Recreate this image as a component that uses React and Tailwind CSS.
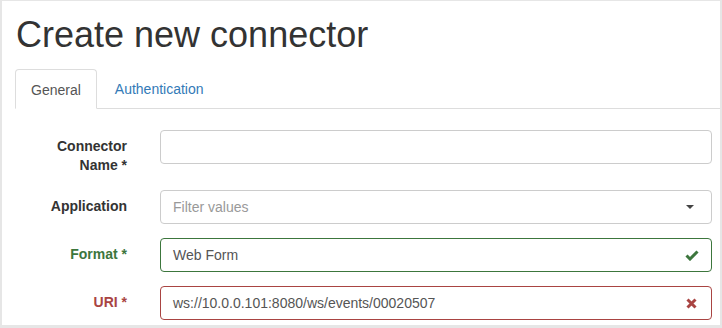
import React from 'react';

const Caret = () => (
  <svg width="8" height="4" viewBox="0 0 8 4" className="text-[#444]">
    <path d="M0 0h8L4 4z" fill="currentColor" />
  </svg>
);

const Check = () => (
  <svg width="14" height="11" viewBox="0 0 14 11">
    <path d="M1.5 5.5l3.5 3.5L12.5 1.5" fill="none" stroke="#3c763d" strokeWidth="3" />
  </svg>
);

const Cross = () => (
  <svg width="11" height="11" viewBox="0 0 11 11">
    <path d="M1.5 1.5l8 8M9.5 1.5l-8 8" fill="none" stroke="#a94442" strokeWidth="3" />
  </svg>
);

const Row = ({ label, tone, height, children }) => {
  const labelColor = tone === 'ok' ? 'text-[#3c763d]' : tone === 'err' ? 'text-[#a94442]' : 'text-[#333]';
  return (
    <div className={`flex ${height}`}>
      <label className={`w-[141px] shrink-0 pr-[16px] pt-[7px] text-right font-bold leading-[19px] ${labelColor}`}>
        {label}
      </label>
      <div className="ml-[17px] w-[552px]">{children}</div>
    </div>
  );
};

const inputBase = 'flex h-[34px] items-center justify-between rounded-[4px] border px-3 text-[14px]';

export default function App() {
  return (
    <div className="h-[328px] w-[722px] overflow-hidden bg-white font-['Liberation_Sans',Arial,sans-serif] text-[14px] text-[#333]">
      <div className="h-full border-t border-r-2 border-b-[3px] border-l-2 border-[#e6e6e6]">
        <h1 className="mt-[14px] ml-[14px] text-[36px] leading-[40px] font-normal text-[#333]">Create new connector</h1>

        <ul className="mt-[14px] ml-[13px] flex border-b border-[#ddd]">
          <li className="-mb-px rounded-t-[4px] border border-[#ddd] border-b-white bg-white px-[15px] pt-[10px] pb-[8px] leading-[20px] text-[#555]">
            General
          </li>
          <li className="ml-[3px] px-[15px] pt-[10px] pb-[8px] leading-[20px] text-[#337ab7]">Authentication</li>
        </ul>

        <form className="mt-[21px]">
          <Row label={<>Connector<br />Name *</>} height="h-[60px]">
            <div className={`${inputBase} border-[#ccc]`} />
          </Row>
          <Row label="Application" height="h-[48px]">
            <div className={`${inputBase} border-[#ccc] text-[#999]`}>
              <span>Filter values</span>
              <span className="mr-[5px] mb-[1px]"><Caret /></span>
            </div>
          </Row>
          <Row label="Format *" tone="ok" height="h-[48px]">
            <div className={`${inputBase} border-[#3c763d] text-[#555]`}>
              <span>Web Form</span>
              <span className="mt-[1px]"><Check /></span>
            </div>
          </Row>
          <Row label="URI *" tone="err" height="h-[48px]">
            <div className={`${inputBase} border-[#a94442] text-[#555]`}>
              <span>ws://10.0.0.101:8080/ws/events/00020507</span>
              <span className="mr-[2px] mt-[1px]"><Cross /></span>
            </div>
          </Row>
        </form>
      </div>
    </div>
  );
}
